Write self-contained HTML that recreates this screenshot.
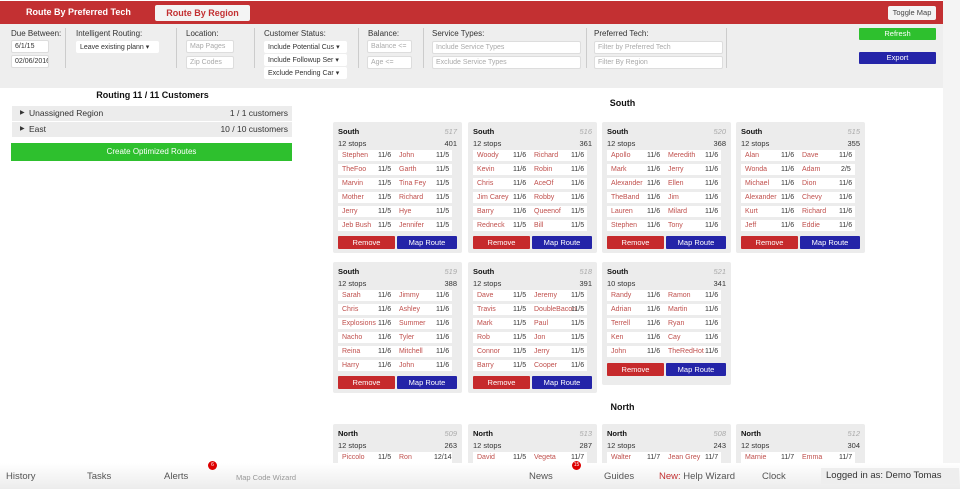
<!DOCTYPE html>
<html><head><meta charset="utf-8"><style>
*{box-sizing:border-box;margin:0;padding:0}
body{width:960px;height:489px;overflow:hidden;background:#fff;font-family:"Liberation Sans",sans-serif;position:relative;font-size:8px;color:#333}
.a{position:absolute}
#right{left:943px;top:0;width:17px;height:489px;background:#f4f4f4}
#hdr{left:0;top:1px;width:943px;height:23px;background:#c33032}
#fb{left:0;top:24px;width:943px;height:64px;background:#eee}
.lbl{font-size:8px;color:#333}
.in{background:#fff;border:1px solid #ddd;border-radius:2px;height:13px;font-size:7px;color:#aaa;padding:2px 3px;white-space:nowrap;overflow:hidden}
.sel{background:#fff;border-radius:2px;height:12px;font-size:7px;color:#333;padding:2px 4px;white-space:nowrap;overflow:hidden}
.sep{width:1px;background:#ccc;top:28px;height:40px}
.card{background:#ececec;border-radius:2px;width:129px}
.card .t{position:absolute;left:5px;top:5px;font-weight:bold;font-size:7.5px;color:#111}
.card .n{position:absolute;right:5px;top:5px;font-style:italic;color:#aaa;font-size:7.5px}
.card .s{position:absolute;left:5px;top:17px;font-size:7.5px}
.card .c{position:absolute;right:5px;top:17px;font-size:7.5px}
.r{position:absolute;left:5px;width:114px;height:11px;background:#fff;font-size:7px;line-height:11px}
.r span{position:absolute;top:0}
.r .p{color:#c0504d}
.b1,.b2{position:absolute;height:13px;color:#fff;font-size:7.5px;text-align:center;line-height:13px;border-radius:1px}
.b1{left:5px;width:57px;background:#c62a2c}
.b2{left:64px;width:60px;background:#2424a8}
#ft{left:0;top:463px;width:960px;height:26px;background:linear-gradient(#fff,#ececec)}
#ft div{position:absolute;top:8px;font-size:9.5px;color:#555}
.badge{position:absolute;width:9px;height:9px;border-radius:50%;background:#d00;color:#fff;font-size:5px;text-align:center;line-height:9px}
</style></head><body>
<div class="a" id="right"></div>
<div class="a" id="hdr">
<div class="a" style="left:26px;top:6px;color:#fff;font-weight:bold;font-size:9px">Route By Preferred Tech</div>
<div class="a" style="left:155px;top:4px;width:95px;height:16px;background:#f4f4f4;border-radius:2px;color:#c33032;font-weight:bold;font-size:9px;text-align:center;line-height:16px">Route By Region</div>
<div class="a" style="left:888px;top:5px;width:48px;height:14px;background:#f4f4f4;border-radius:2px;color:#444;font-size:7.5px;text-align:center;line-height:14px">Toggle Map</div>
</div>
<div class="a" id="fb">
<div class="a lbl" style="left:11px;top:5px">Due Between:</div>
<div class="a in" style="left:11px;top:16px;width:38px;color:#333">6/1/15</div>
<div class="a in" style="left:11px;top:31px;width:38px;color:#333">02/06/2016</div>
<div class="a lbl" style="left:76px;top:5px">Intelligent Routing:</div>
<div class="a sel" style="left:76px;top:17px;width:83px">Leave existing plann &#9662;</div>
<div class="a lbl" style="left:186px;top:5px">Location:</div>
<div class="a in" style="left:186px;top:16px;width:48px">Map Pages</div>
<div class="a in" style="left:186px;top:32px;width:48px">Zip Codes</div>
<div class="a lbl" style="left:264px;top:5px">Customer Status:</div>
<div class="a sel" style="left:264px;top:17px;width:83px">Include Potential Cus &#9662;</div>
<div class="a sel" style="left:264px;top:30px;width:83px">Include Followup Ser &#9662;</div>
<div class="a sel" style="left:264px;top:43px;width:83px">Exclude Pending Car &#9662;</div>
<div class="a lbl" style="left:368px;top:5px">Balance:</div>
<div class="a in" style="left:367px;top:16px;width:45px">Balance &lt;=</div>
<div class="a in" style="left:367px;top:32px;width:45px">Age &lt;=</div>
<div class="a lbl" style="left:432px;top:5px">Service Types:</div>
<div class="a in" style="left:432px;top:17px;width:149px">Include Service Types</div>
<div class="a in" style="left:432px;top:32px;width:149px">Exclude Service Types</div>
<div class="a lbl" style="left:594px;top:5px">Preferred Tech:</div>
<div class="a in" style="left:594px;top:17px;width:129px">Filter by Preferred Tech</div>
<div class="a in" style="left:594px;top:32px;width:129px">Filter By Region</div>
<div class="a" style="left:859px;top:4px;width:77px;height:12px;background:#2ec02e;color:#fff;font-size:7.5px;text-align:center;line-height:12px;border-radius:1px">Refresh</div>
<div class="a" style="left:859px;top:28px;width:77px;height:12px;background:#2424a8;color:#fff;font-size:7.5px;text-align:center;line-height:12px;border-radius:1px">Export</div>
</div>
<div class="a sep" style="left:65px"></div><div class="a sep" style="left:176px"></div><div class="a sep" style="left:254px"></div><div class="a sep" style="left:358px"></div><div class="a sep" style="left:423px"></div><div class="a sep" style="left:586px"></div><div class="a sep" style="left:726px"></div>

<div class="a" style="left:0;top:90px;width:305px;text-align:center;font-weight:bold;font-size:9px;color:#111">Routing 11 / 11 Customers</div>
<div class="a" style="left:12px;top:106px;width:280px;height:15px;background:#ececec;font-size:8.5px;line-height:15px"><span style="position:absolute;left:8px;font-size:6px">&#9654;</span><span style="position:absolute;left:17px">Unassigned Region</span><span style="position:absolute;right:4px">1 / 1 customers</span></div>
<div class="a" style="left:12px;top:122px;width:280px;height:15px;background:#ececec;font-size:8.5px;line-height:15px"><span style="position:absolute;left:8px;font-size:6px">&#9654;</span><span style="position:absolute;left:17px">East</span><span style="position:absolute;right:4px">10 / 10 customers</span></div>
<div class="a" style="left:11px;top:143px;width:281px;height:18px;background:#2ec02e;color:#fff;font-size:8px;text-align:center;line-height:18px">Create Optimized Routes</div>

<div class="a" style="left:600px;top:98px;width:45px;text-align:center;font-weight:bold;font-size:9px;color:#111">South</div>
<div class="a" style="left:600px;top:402px;width:45px;text-align:center;font-weight:bold;font-size:9px;color:#111">North</div>

<!-- Row 1 -->
<div class="a card" style="left:333px;top:122px;height:131px">
<div class="t">South</div><div class="n">517</div><div class="s">12 stops</div><div class="c">401</div>
<div class="r" style="top:28px"><span class="p" style="left:4px">Stephen</span><span style="left:40px">11/6</span><span class="p" style="left:61px">John</span><span style="left:98px">11/5</span></div>
<div class="r" style="top:42px"><span class="p" style="left:4px">TheFoo</span><span style="left:40px">11/5</span><span class="p" style="left:61px">Garth</span><span style="left:98px">11/5</span></div>
<div class="r" style="top:56px"><span class="p" style="left:4px">Marvin</span><span style="left:40px">11/5</span><span class="p" style="left:61px">Tina Fey</span><span style="left:98px">11/5</span></div>
<div class="r" style="top:70px"><span class="p" style="left:4px">Mother</span><span style="left:40px">11/5</span><span class="p" style="left:61px">Richard</span><span style="left:98px">11/5</span></div>
<div class="r" style="top:84px"><span class="p" style="left:4px">Jerry</span><span style="left:40px">11/5</span><span class="p" style="left:61px">Hye</span><span style="left:98px">11/5</span></div>
<div class="r" style="top:98px"><span class="p" style="left:4px">Jeb Bush</span><span style="left:40px">11/5</span><span class="p" style="left:61px">Jennifer</span><span style="left:98px">11/5</span></div>
<div class="b1" style="top:114px">Remove</div><div class="b2" style="top:114px">Map Route</div></div>

<div class="a card" style="left:468px;top:122px;height:131px">
<div class="t">South</div><div class="n">516</div><div class="s">12 stops</div><div class="c">361</div>
<div class="r" style="top:28px"><span class="p" style="left:4px">Woody</span><span style="left:40px">11/6</span><span class="p" style="left:61px">Richard</span><span style="left:98px">11/6</span></div>
<div class="r" style="top:42px"><span class="p" style="left:4px">Kevin</span><span style="left:40px">11/6</span><span class="p" style="left:61px">Robin</span><span style="left:98px">11/6</span></div>
<div class="r" style="top:56px"><span class="p" style="left:4px">Chris</span><span style="left:40px">11/6</span><span class="p" style="left:61px">AceOf</span><span style="left:98px">11/6</span></div>
<div class="r" style="top:70px"><span class="p" style="left:4px">Jim Carey</span><span style="left:40px">11/6</span><span class="p" style="left:61px">Robby</span><span style="left:98px">11/6</span></div>
<div class="r" style="top:84px"><span class="p" style="left:4px">Barry</span><span style="left:40px">11/6</span><span class="p" style="left:61px">Queenof</span><span style="left:98px">11/5</span></div>
<div class="r" style="top:98px"><span class="p" style="left:4px">Redneck</span><span style="left:40px">11/5</span><span class="p" style="left:61px">Bill</span><span style="left:98px">11/5</span></div>
<div class="b1" style="top:114px">Remove</div><div class="b2" style="top:114px">Map Route</div></div>

<div class="a card" style="left:602px;top:122px;height:131px">
<div class="t">South</div><div class="n">520</div><div class="s">12 stops</div><div class="c">368</div>
<div class="r" style="top:28px"><span class="p" style="left:4px">Apollo</span><span style="left:40px">11/6</span><span class="p" style="left:61px">Meredith</span><span style="left:98px">11/6</span></div>
<div class="r" style="top:42px"><span class="p" style="left:4px">Mark</span><span style="left:40px">11/6</span><span class="p" style="left:61px">Jerry</span><span style="left:98px">11/6</span></div>
<div class="r" style="top:56px"><span class="p" style="left:4px">Alexander</span><span style="left:40px">11/6</span><span class="p" style="left:61px">Ellen</span><span style="left:98px">11/6</span></div>
<div class="r" style="top:70px"><span class="p" style="left:4px">TheBand</span><span style="left:40px">11/6</span><span class="p" style="left:61px">Jim</span><span style="left:98px">11/6</span></div>
<div class="r" style="top:84px"><span class="p" style="left:4px">Lauren</span><span style="left:40px">11/6</span><span class="p" style="left:61px">Milard</span><span style="left:98px">11/6</span></div>
<div class="r" style="top:98px"><span class="p" style="left:4px">Stephen</span><span style="left:40px">11/6</span><span class="p" style="left:61px">Tony</span><span style="left:98px">11/6</span></div>
<div class="b1" style="top:114px">Remove</div><div class="b2" style="top:114px">Map Route</div></div>

<div class="a card" style="left:736px;top:122px;height:131px">
<div class="t">South</div><div class="n">515</div><div class="s">12 stops</div><div class="c">355</div>
<div class="r" style="top:28px"><span class="p" style="left:4px">Alan</span><span style="left:40px">11/6</span><span class="p" style="left:61px">Dave</span><span style="left:98px">11/6</span></div>
<div class="r" style="top:42px"><span class="p" style="left:4px">Wonda</span><span style="left:40px">11/6</span><span class="p" style="left:61px">Adam</span><span style="left:100px">2/5</span></div>
<div class="r" style="top:56px"><span class="p" style="left:4px">Michael</span><span style="left:40px">11/6</span><span class="p" style="left:61px">Dion</span><span style="left:98px">11/6</span></div>
<div class="r" style="top:70px"><span class="p" style="left:4px">Alexander</span><span style="left:40px">11/6</span><span class="p" style="left:61px">Chevy</span><span style="left:98px">11/6</span></div>
<div class="r" style="top:84px"><span class="p" style="left:4px">Kurt</span><span style="left:40px">11/6</span><span class="p" style="left:61px">Richard</span><span style="left:98px">11/6</span></div>
<div class="r" style="top:98px"><span class="p" style="left:4px">Jeff</span><span style="left:40px">11/6</span><span class="p" style="left:61px">Eddie</span><span style="left:98px">11/6</span></div>
<div class="b1" style="top:114px">Remove</div><div class="b2" style="top:114px">Map Route</div></div>

<!-- Row 2 -->
<div class="a card" style="left:333px;top:262px;height:131px">
<div class="t">South</div><div class="n">519</div><div class="s">12 stops</div><div class="c">388</div>
<div class="r" style="top:28px"><span class="p" style="left:4px">Sarah</span><span style="left:40px">11/6</span><span class="p" style="left:61px">Jimmy</span><span style="left:98px">11/6</span></div>
<div class="r" style="top:42px"><span class="p" style="left:4px">Chris</span><span style="left:40px">11/6</span><span class="p" style="left:61px">Ashley</span><span style="left:98px">11/6</span></div>
<div class="r" style="top:56px"><span class="p" style="left:4px">Explosions</span><span style="left:40px">11/6</span><span class="p" style="left:61px">Summer</span><span style="left:98px">11/6</span></div>
<div class="r" style="top:70px"><span class="p" style="left:4px">Nacho</span><span style="left:40px">11/6</span><span class="p" style="left:61px">Tyler</span><span style="left:98px">11/6</span></div>
<div class="r" style="top:84px"><span class="p" style="left:4px">Reina</span><span style="left:40px">11/6</span><span class="p" style="left:61px">Mitchell</span><span style="left:98px">11/6</span></div>
<div class="r" style="top:98px"><span class="p" style="left:4px">Harry</span><span style="left:40px">11/6</span><span class="p" style="left:61px">John</span><span style="left:98px">11/6</span></div>
<div class="b1" style="top:114px">Remove</div><div class="b2" style="top:114px">Map Route</div></div>

<div class="a card" style="left:468px;top:262px;height:131px">
<div class="t">South</div><div class="n">518</div><div class="s">12 stops</div><div class="c">391</div>
<div class="r" style="top:28px"><span class="p" style="left:4px">Dave</span><span style="left:40px">11/5</span><span class="p" style="left:61px">Jeremy</span><span style="left:98px">11/5</span></div>
<div class="r" style="top:42px"><span class="p" style="left:4px">Travis</span><span style="left:40px">11/5</span><span class="p" style="left:61px">DoubleBacon</span><span style="left:98px">11/5</span></div>
<div class="r" style="top:56px"><span class="p" style="left:4px">Mark</span><span style="left:40px">11/5</span><span class="p" style="left:61px">Paul</span><span style="left:98px">11/5</span></div>
<div class="r" style="top:70px"><span class="p" style="left:4px">Rob</span><span style="left:40px">11/5</span><span class="p" style="left:61px">Jon</span><span style="left:98px">11/5</span></div>
<div class="r" style="top:84px"><span class="p" style="left:4px">Connor</span><span style="left:40px">11/5</span><span class="p" style="left:61px">Jerry</span><span style="left:98px">11/5</span></div>
<div class="r" style="top:98px"><span class="p" style="left:4px">Barry</span><span style="left:40px">11/5</span><span class="p" style="left:61px">Cooper</span><span style="left:98px">11/6</span></div>
<div class="b1" style="top:114px">Remove</div><div class="b2" style="top:114px">Map Route</div></div>

<div class="a card" style="left:602px;top:262px;height:123px">
<div class="t">South</div><div class="n">521</div><div class="s">10 stops</div><div class="c">341</div>
<div class="r" style="top:28px"><span class="p" style="left:4px">Randy</span><span style="left:40px">11/6</span><span class="p" style="left:61px">Ramon</span><span style="left:98px">11/6</span></div>
<div class="r" style="top:42px"><span class="p" style="left:4px">Adrian</span><span style="left:40px">11/6</span><span class="p" style="left:61px">Martin</span><span style="left:98px">11/6</span></div>
<div class="r" style="top:56px"><span class="p" style="left:4px">Terrell</span><span style="left:40px">11/6</span><span class="p" style="left:61px">Ryan</span><span style="left:98px">11/6</span></div>
<div class="r" style="top:70px"><span class="p" style="left:4px">Ken</span><span style="left:40px">11/6</span><span class="p" style="left:61px">Cay</span><span style="left:98px">11/6</span></div>
<div class="r" style="top:84px"><span class="p" style="left:4px">John</span><span style="left:40px">11/6</span><span class="p" style="left:61px">TheRedHot</span><span style="left:98px">11/6</span></div>
<div class="b1" style="top:101px">Remove</div><div class="b2" style="top:101px">Map Route</div></div>

<!-- North -->
<div class="a card" style="left:333px;top:424px;height:60px">
<div class="t">North</div><div class="n">509</div><div class="s">12 stops</div><div class="c">263</div>
<div class="r" style="top:28px"><span class="p" style="left:4px">Piccolo</span><span style="left:40px">11/5</span><span class="p" style="left:61px">Ron</span><span style="left:96px">12/14</span></div></div>
<div class="a card" style="left:468px;top:424px;height:60px">
<div class="t">North</div><div class="n">513</div><div class="s">12 stops</div><div class="c">287</div>
<div class="r" style="top:28px"><span class="p" style="left:4px">David</span><span style="left:40px">11/5</span><span class="p" style="left:61px">Vegeta</span><span style="left:98px">11/7</span></div></div>
<div class="a card" style="left:602px;top:424px;height:60px">
<div class="t">North</div><div class="n">508</div><div class="s">12 stops</div><div class="c">243</div>
<div class="r" style="top:28px"><span class="p" style="left:4px">Walter</span><span style="left:40px">11/7</span><span class="p" style="left:61px">Jean Grey</span><span style="left:98px">11/7</span></div></div>
<div class="a card" style="left:736px;top:424px;height:60px">
<div class="t">North</div><div class="n">512</div><div class="s">12 stops</div><div class="c">304</div>
<div class="r" style="top:28px"><span class="p" style="left:4px">Marnie</span><span style="left:40px">11/7</span><span class="p" style="left:61px">Emma</span><span style="left:98px">11/7</span></div></div>

<div class="a" id="ft">
<div style="left:6px">History</div>
<div style="left:87px">Tasks</div>
<div style="left:164px">Alerts</div>
<div style="left:236px;font-size:7.5px;color:#999;top:10px">Map Code Wizard</div>
<div style="left:529px">News</div>
<div style="left:604px">Guides</div>
<div style="left:659px"><span style="color:#c33032">New:</span> Help Wizard</div>
<div style="left:762px">Clock</div>
<div style="left:821px;top:5px;width:138px;height:16px;background:#eee;line-height:16px;padding-left:5px;color:#333">Logged in as: Demo Tomas</div>
</div>
<div class="badge" style="left:208px;top:461px">6</div>
<div class="badge" style="left:572px;top:461px">15</div>
</body></html>
